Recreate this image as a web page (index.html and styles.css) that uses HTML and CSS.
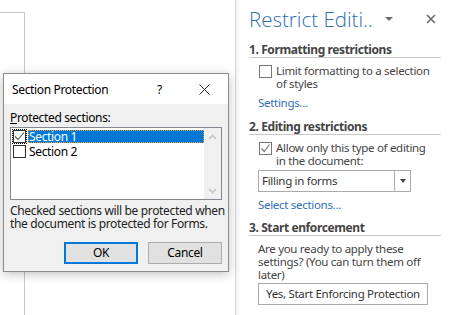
FILE: index.html
```html
<!DOCTYPE html>
<html lang="en">
<head>
<meta charset="UTF-8">
<title>Restrict Editing</title>
<link rel="stylesheet" href="styles.css">
</head>
<body>
    <div class="screen">
        <div class="doc-area">
            <div class="page"></div>
        </div>
        <div class="pane">
            <div class="pane-head">
                <div class="pane-title">Restrict Editi..</div>
                <div class="pane-menu"></div>
                <svg class="pane-close" width="10" height="10" viewBox="0 0 10 10"><path d="M1 1L9 9M9 1L1 9" stroke="#6a6a6a" stroke-width="1.6"/></svg>
            </div>

            <div class="pane-section">1. Formatting restrictions</div>
            <div class="opt">
                <span class="box"></span>
                <span>Limit formatting to a selection of styles</span>
            </div>
            <div class="link">Settings...</div>

            <div class="pane-section">2. Editing restrictions</div>
            <div class="opt">
                <span class="box"><svg width="11" height="11" viewBox="0 0 11 11"><path d="M1.5 5.5L4.2 8.5L9.5 1.5" fill="none" stroke="#777" stroke-width="1.2"/></svg></span>
                <span>Allow only this type of editing in the document:</span>
            </div>
            <div class="select">
                <span class="select-text">Filling in forms</span>
                <span class="select-arrow"></span>
            </div>
            <div class="link">Select sections...</div>

            <div class="pane-section">3. Start enforcement</div>
            <div class="note">Are you ready to apply these settings? (You can turn them off later)</div>
            <div class="enforce">Yes, Start Enforcing Protection</div>
        </div>

        <div class="dialog">
            <div class="dlg-title">
                <span class="dlg-name">Section Protection</span>
                <span class="dlg-help">?</span>
                <svg class="dlg-x" width="11" height="11" viewBox="0 0 11 11"><path d="M0.5 0.5L10.5 10.5M10.5 0.5L0.5 10.5" stroke="#222" stroke-width="1"/></svg>
            </div>
            <div class="dlg-body">
                <div class="dlg-label"><u>P</u>rotected sections:</div>
                <div class="listbox">
                    <div class="items">
                        <div class="item">
                            <span class="cb focus"><svg width="11" height="11" viewBox="0 0 11 11"><path d="M1 5.5L4 8.5L10 1.5" fill="none" stroke="#555" stroke-width="1.1"/></svg></span>
                            <span class="item-text selected">Section 1</span>
                        </div>
                        <div class="item">
                            <span class="cb"></span>
                            <span class="item-text">Section 2</span>
                        </div>
                    </div>
                    <div class="scroll">
                        <svg width="9" height="6" viewBox="0 0 9 6"><path d="M1 5L4.5 1.5L8 5" fill="none" stroke="#c5c5c5" stroke-width="1.6"/></svg>
                        <svg width="9" height="6" viewBox="0 0 9 6"><path d="M1 1L4.5 4.5L8 1" fill="none" stroke="#c5c5c5" stroke-width="1.6"/></svg>
                    </div>
                </div>
                <div class="dlg-note">Checked sections will be protected when the document is protected for Forms.</div>
                <div class="dlg-buttons">
                    <div class="btn default">OK</div>
                    <div class="btn">Cancel</div>
                </div>
            </div>
        </div>
    </div>
</body>
</html>
```

FILE: styles.css
```css
body {
    margin: 0;
    padding: 0;
    background-color: #ffffff;
    font-family: "Noto Sans", "Open Sans", sans-serif;
    font-size: 12px;
    color: #444;
}
.screen {
    position: relative;
    display: flex;
    width: 449px;
    height: 315px;
    overflow: hidden;
}
.doc-area {
    width: 235px;
    border-right: 1px solid #d6d6d6;
}
.page {
    width: 24px;
    height: 400px;
    margin-top: 12px;
    border-top: 1px solid #c8c8c8;
    border-right: 1px solid #c8c8c8;
}

/* task pane */
.pane {
    flex: 1;
    padding: 0 8px 0 13px;
    font-size: 11.5px;
    letter-spacing: -0.3px;
    background: linear-gradient(to right, #f3f3f3, #ffffff 5px);
}
.pane-head {
    display: flex;
    align-items: center;
    height: 42px;
}
.pane-title {
    font-family: "Open Sans", sans-serif;
    font-weight: 300;
    font-size: 20.5px;
    letter-spacing: 0;
    color: #2e6eb5;
    margin-top: -4px;
    white-space: nowrap;
}
.pane-menu {
    width: 0;
    height: 0;
    border-left: 4px solid transparent;
    border-right: 4px solid transparent;
    border-top: 4px solid #6a6a6a;
    margin-left: 12px;
    margin-top: -5px;
}
.pane-close {
    margin-left: auto;
    margin-right: 5px;
    margin-top: -5px;
}
.pane-section {
    font-weight: bold;
    font-size: 12px;
    letter-spacing: -0.4px;
    color: #444;
    border-bottom: 1px solid #c8c8c8;
    margin-bottom: 6px;
    line-height: 15px;
}
.opt {
    display: flex;
    align-items: flex-start;
    margin-left: 10px;
    line-height: 13px;
    padding-right: 8px;
}
.box {
    flex: none;
    width: 11px;
    height: 11px;
    border: 1px solid #777;
    margin-top: 1px;
    margin-right: 4px;
    display: flex;
}
.link {
    color: #2e6eb5;
    margin: 6px 0 9px 9px;
    line-height: 14px;
}
.select {
    display: flex;
    width: 151px;
    height: 20px;
    border: 1px solid #ababab;
    margin: 3px 0 0 9px;
    line-height: 20px;
}
.select-text {
    flex: 1;
    padding-left: 3px;
    color: #333;
}
.select-arrow {
    width: 15px;
    border-left: 1px solid #ababab;
    display: flex;
    align-items: center;
    justify-content: center;
}
.select-arrow::after {
    content: "";
    border-left: 3.5px solid transparent;
    border-right: 3.5px solid transparent;
    border-top: 4px solid #444;
}
.pane .select + .link {
    margin-top: 6px;
    margin-bottom: 8px;
}
.note {
    margin-left: 9px;
    line-height: 13px;
    padding-right: 4px;
}
.enforce {
    display: inline-block;
    margin: 2px 0 0 9px;
    border: 1px solid #ababab;
    padding: 0 7px;
    height: 20px;
    line-height: 20px;
    white-space: nowrap;
    color: #333;
}

/* dialog */
.dialog {
    position: absolute;
    left: 3px;
    top: 73px;
    width: 224px;
    height: 197px;
    border: 1px solid #8c8c8c;
    background-color: #f0f0f0;
    box-shadow: 0 2px 10px rgba(0, 0, 0, 0.25);
    color: #000;
    letter-spacing: -0.35px;
}
.dlg-title {
    display: flex;
    align-items: center;
    height: 30px;
    background-color: #ffffff;
    padding-left: 8px;
}
.dlg-name {
    flex: 1;
}
.dlg-help {
    width: 20px;
}
.dlg-x {
    margin-right: 18px;
    margin-left: 22px;
}
.dlg-body {
    padding: 7px 6px 0 6px;
}
.dlg-label {
    line-height: 14px;
}
.listbox {
    display: flex;
    height: 71px;
    border: 1px solid #828790;
    background-color: #ffffff;
    margin-top: 2px;
}
.items {
    flex: 1;
    padding-top: 1px;
}
.item {
    display: flex;
    align-items: center;
    height: 14px;
    margin-bottom: 1px;
}
.cb {
    width: 11px;
    height: 11px;
    border: 1px solid #333;
    margin-left: 2px;
    margin-right: 2px;
    display: flex;
}
.cb.focus {
    outline: 1px dotted #000;
}
.item-text {
    flex: 1;
    padding-left: 1px;
    line-height: 13px;
}
.item-text.selected {
    background-color: #0078d7;
    color: #ffffff;
    outline: 1px dotted #e8a040;
    outline-offset: -1px;
}
.scroll {
    width: 17px;
    background-color: #f0f0f0;
    display: flex;
    flex-direction: column;
    justify-content: space-between;
    align-items: center;
    padding: 6px 0 5px;
    box-sizing: border-box;
}
.dlg-note {
    margin-top: 4px;
    margin-right: -4px;
    line-height: 13px;
    color: #222;
}
.dlg-buttons {
    display: flex;
    justify-content: flex-end;
    gap: 10px;
    margin-top: 12px;
}
.btn {
    width: 72px;
    height: 20px;
    line-height: 20px;
    text-align: center;
    background-color: #e1e1e1;
    border: 1px solid #adadad;
}
.btn.default {
    border: 2px solid #0078d7;
    width: 70px;
    height: 18px;
    line-height: 18px;
}
```
